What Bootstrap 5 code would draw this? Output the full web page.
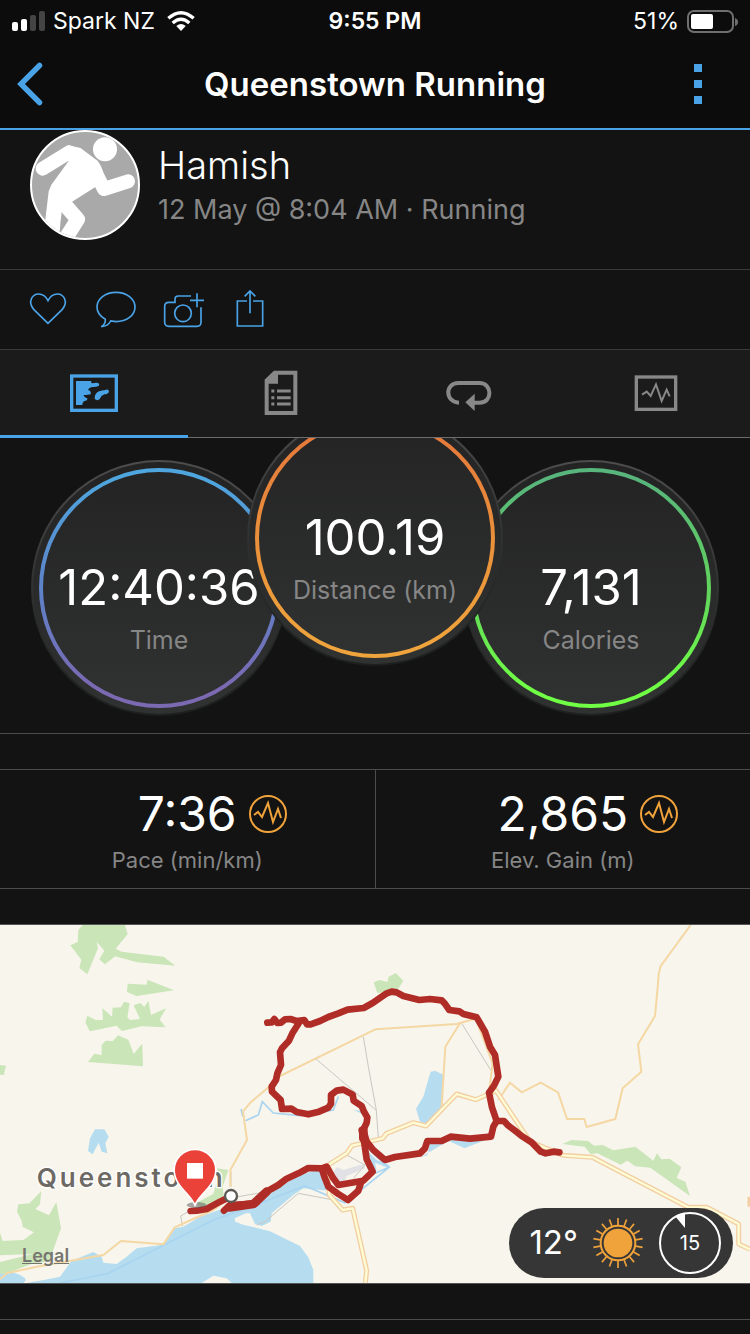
<!DOCTYPE html>
<html lang="en">
<head>
<meta charset="utf-8">
<meta name="viewport" content="width=device-width, initial-scale=1">
<title>Queenstown Running</title>
<link href="https://cdn.jsdelivr.net/npm/bootstrap@5.3.0/dist/css/bootstrap.min.css" rel="stylesheet">
<style>
  :root { --accent: #4aa3e6; --amber: #f0a23b; --ink: #131313; --muted: #868686; }
  body { background: var(--ink); color: #fff; font-family: Inter, "Liberation Sans", sans-serif; }
  svg { display: block; overflow: visible; flex: none; }
  button { background: none; border: 0; padding: 0; }
  .muted { color: var(--muted); }

  .top-area { background: #0c0c0c; border-bottom: 2px solid var(--accent); }
  .status { height: 40px; padding: 2px 12px 0; font-size: 23px; line-height: 38px; }
  .title-bar { height: 88px; padding: 0 18px; }
  .title-bar h1 { font-size: 33px; line-height: 40px; font-weight: 600; }
  .title-bar button { width: 68px; height: 48px; }

  .profile { height: 140px; padding: 0 30px; gap: 18px; border-bottom: 1px solid #3a3a3a; }
  .avatar { width: 110px; height: 110px; border-radius: 50%; overflow: hidden; background: #a9a9a9; border: 2px solid #fff; }
  .avatar svg { margin: -2px; overflow: hidden; }
  .profile h2 { font-size: 38px; line-height: 48px; font-weight: 300; margin: 11px 0 0; }
  .profile p { font-size: 27px; line-height: 42px; margin: 0; }

  .actions { height: 80px; padding: 0 28px; gap: 28px; border-bottom: 1px solid #3a3a3a; }
  .actions svg { fill: none; stroke: var(--accent); stroke-width: 5; }

  .tabs { height: 88px; background: #1b1b1b; border-bottom: 1px solid #6c6c6c; color: #888; }
  .tabs button { flex: 1 1 0; height: 88px; color: inherit; border-bottom: 3px solid transparent; }
  .tabs button.active { color: var(--accent); border-color: var(--accent); }
  .tabs svg { margin: 0 auto; }

  .dials { overflow: hidden; padding: 22px 0 17px; border-bottom: 1px solid #4c4c4c; }
  .dial { width: 256px; height: 256px; flex: none; padding: 6px; border: 2px solid transparent; border-radius: 50%;
    background: linear-gradient(#232323, #303131) padding-box, linear-gradient(#4d4d4d, #2b2c2c 60%, #1d1e1e) border-box; }
  .dial + .dial { margin-left: -40px; }
  .dial.raised { margin-top: -50px; z-index: 1; position: relative; }
  .ring { height: 100%; border: 4px solid transparent; border-radius: 50%; padding-top: 84px; text-align: center;
    background: linear-gradient(#242424, #303131) padding-box, linear-gradient(var(--from) 5%, var(--mid) 50%, var(--to) 92%) border-box; }
  .ring-time { --from: #4fa5de; --mid: #5d83c8; --to: #7b69b2; }
  .ring-distance { --from: #e5783b; --mid: #e9903b; --to: #efa33c; }
  .ring-calories { --from: #58b57c; --mid: #61d35d; --to: #70ff45; }
  .figure-value { font-size: 48px; line-height: 64px; white-space: nowrap; }
  .ring .figure-value { font-size: 49px; }
  .ring .muted { font-size: 25px; line-height: 40px; }

  .stats { margin-top: 35px; border-top: 1px solid #4c4c4c; border-bottom: 1px solid #4c4c4c; }
  .stat { height: 118px; padding-top: 12px; text-align: center; }
  .stat:first-child { border-right: 1px solid #4c4c4c; }
  .stat .pair { gap: 12px; }
  .stat .pair::before { content: ""; width: 38px; }
  .stat .muted { font-size: 22px; line-height: 28px; }

  .map-panel { margin-top: 35px; border-top: 1px solid #555; border-bottom: 1px solid #555; }
  .map-panel > svg { width: 100%; height: auto; overflow: hidden; background: #f8f5ec; }
  .legal, .legal:hover { position: absolute; left: 22px; bottom: 15px; font-size: 18px; line-height: 24px; font-weight: 600; color: #77756f; }
  .weather { position: absolute; right: 17px; bottom: 5px; height: 70px; padding: 0 11px 0 20px; gap: 15px; border-radius: 35px; background: #363636; font-size: 33px; }
  .next-card { margin-top: 35px; height: 15px; border-top: 1px solid #4c4c4c; }
</style>
</head>
<body>
<header class="top-area">
  <div class="status d-flex">
    <div class="col d-flex align-items-center gap-2">
      <svg width="33" height="20" viewBox="0 0 33 20"><g fill="#fff"><rect y="11" width="6" height="9" rx="2"/><rect x="9" y="8" width="6" height="12" rx="2"/></g><g fill="#444"><rect x="18" y="4" width="6" height="16" rx="2"/><rect x="27" width="6" height="20" rx="2"/></g></svg>
      <span>Spark NZ</span>
      <svg class="ms-1" width="28" height="20" viewBox="0 0 84 60"><g fill="none" stroke="#fff" stroke-width="10"><path d="M4 22Q42-12 80 22"/><path d="M17 36Q42 13 67 36"/></g><path fill="#fff" d="M28 45q14-12 28 0L42 60z"/></svg>
    </div>
    <div class="fw-semibold">9:55 PM</div>
    <div class="col d-flex align-items-center justify-content-end gap-2">
      <span>51%</span>
      <svg width="51" height="23" viewBox="0 0 51 23"><rect x="1" y="1" width="45" height="21" rx="6" fill="none" stroke="#6f6f6f" stroke-width="2"/><rect x="4" y="4" width="22" height="15" rx="2" fill="#fff"/><path d="M48 8q3 1 3 4t-3 4z" fill="#6f6f6f"/></svg>
    </div>
  </div>
  <div class="title-bar d-flex align-items-center justify-content-between">
    <button type="button" aria-label="Back"><svg width="24" height="42" viewBox="0 0 24 42"><path d="M21.500 2.500 3 21 21.500 39.500" fill="none" stroke="#4aa3e6" stroke-width="5.500" stroke-linecap="round"/></svg></button>
    <h1 class="m-0">Queenstown Running</h1>
    <button type="button" aria-label="More" class="d-flex justify-content-center align-items-center"><svg width="8" height="40" viewBox="0 0 8 40" fill="#4aa3e6"><path d="M0 0h8v8H0zM0 16h8v8H0zM0 32h8v8H0z"/></svg></button>
  </div>
</header>

<main>
  <section class="profile d-flex">
    <div class="avatar flex-shrink-0">
      <svg width="110" height="110" viewBox="90 30 330 330"><g fill="#fff" stroke="#fff" stroke-linejoin="round" stroke-linecap="round"><circle cx="315" cy="88" r="36" stroke="none"/><path d="M128 146 207 97" stroke-width="42" fill="none"/><path d="M207 82 240 90 288 126Q305 148 308 180L213 240 180 267Q174 310 172 352L140 315 152 215 160 196 212 125Z" stroke-width="12"/><path d="M285 155 312 207 384 184" stroke-width="42" fill="none"/><path d="M186 244 233 298 200 350" stroke-width="44" fill="none"/></g></svg>
    </div>
    <div>
      <h2>Hamish</h2>
      <p class="muted">12 May @ 8:04 AM · Running</p>
    </div>
  </section>

  <section class="actions d-flex align-items-center">
    <button type="button" aria-label="Like"><svg width="40" height="40" viewBox="84 509 120 120"><path d="M144 609 101 567C83 546 95 521 116 521Q134 521 144 541Q154 521 172 521C193 521 205 546 187 567Z"/></svg></button>
    <button type="button" aria-label="Comment"><svg width="40" height="40" viewBox="288 509 120 120"><path d="M316 597C300 588 291 577 291 560C291 535 316 516 348 516S405 535 405 560 380 604 348 604L332 602Q324 618 304 619Q317 611 316 597Z"/></svg></button>
    <button type="button" aria-label="Add photo"><svg width="40" height="40" viewBox="492 509 120 120"><path d="M603 561V606Q603 618 591 618H507Q494 618 494 606V558Q494 546 507 546H525V537Q525 527 535 527H573M591 519V561M570 540H612"/><circle cx="549" cy="579" r="25"/></svg></button>
    <button type="button" aria-label="Share"><svg width="40" height="40" viewBox="696 509 120 120"><path d="M741 542H712V617H788V542H759M750 579V514M734 528 750 512 766 528"/></svg></button>
  </section>

  <nav class="tabs d-flex" aria-label="Activity views">
    <button type="button" class="active" aria-label="Map"><svg width="48" height="48" viewBox="210 57 144 144"><rect x="215" y="78" width="134" height="103" fill="none" stroke="currentColor" stroke-width="10"/><path fill="currentColor" d="M228 93H274Q271 102 281 99L291 98Q300 100 297 107Q288 112 276 111Q263 115 265 121Q274 122 272 133Q261 136 250 135Q252 142 263 146Q261 153 253 153Q246 157 247 165H228zM284 147Q283 130 297 124Q306 121 316 120Q326 116 327 125Q325 132 313 133Q303 137 299 147Q293 154 284 147z"/></svg></button>
    <button type="button" aria-label="Details"><svg width="48" height="48" viewBox="772 57 144 144"><path d="M801 91 825 68H887V189H801Z" fill="none" stroke="currentColor" stroke-width="12"/><path d="M802 93 827 68H835V101H802z" fill="currentColor"/><path d="M815 123h9M832 123h41M815 143h9M832 143h41M815 162h9M832 162h41" stroke="currentColor" stroke-width="9"/></svg></button>
    <button type="button" aria-label="Laps"><svg width="48" height="48" viewBox="210 57 144 144"><path d="M252 158C210 157 209 99 250 99H314C352 99 354 158 314 158H292" fill="none" stroke="currentColor" stroke-width="12"/><path d="M271 157 299 131V183z" fill="currentColor"/></svg></button>
    <button type="button" aria-label="Charts"><svg width="48" height="48" viewBox="772 57 144 144"><g fill="none" stroke="currentColor"><rect x="785" y="81" width="118" height="97" stroke-width="10"/><path d="M802 134 816 125 828 138 844 103 861 153 876 119 885 139" stroke-width="6"/></g></svg></button>
  </nav>

  <section class="dials d-flex justify-content-center align-items-start">
    <div class="dial"><div class="ring ring-time"><div class="figure-value">12:40:36</div><div class="muted">Time</div></div></div>
    <div class="dial raised"><div class="ring ring-distance"><div class="figure-value">100.19</div><div class="muted">Distance (km)</div></div></div>
    <div class="dial"><div class="ring ring-calories"><div class="figure-value">7,131</div><div class="muted">Calories</div></div></div>
  </section>

  <section class="stats d-flex">
    <div class="stat col">
      <div class="pair d-flex justify-content-center align-items-center"><span class="figure-value">7:36</span>
        <button type="button" aria-label="Pace chart"><svg width="38" height="38" viewBox="0 0 38 38" fill="none" stroke="#f0a23b" stroke-width="2"><circle cx="19" cy="19" r="18"/><path d="M5 20 9 17 13 22 19 8 24 27 29 14 32 23"/></svg></button></div>
      <div class="muted">Pace (min/km)</div>
    </div>
    <div class="stat col">
      <div class="pair d-flex justify-content-center align-items-center"><span class="figure-value">2,865</span>
        <button type="button" aria-label="Elevation chart"><svg width="38" height="38" viewBox="0 0 38 38" fill="none" stroke="#f0a23b" stroke-width="2"><circle cx="19" cy="19" r="18"/><path d="M5 20 9 17 13 22 19 8 24 27 29 14 32 23"/></svg></button></div>
      <div class="muted">Elev. Gain (m)</div>
    </div>
  </section>

  <section class="map-panel position-relative">
    <svg viewBox="0 15 2250 1074" role="img" aria-label="Route map around Queenstown">
      <!-- parks -->
      <g fill="#cae5b8">
        <path d="M248 15H375L383 42 347 86 365 95 491 110 526 137 411 127 345 109 315 133 298 118 313 92 290 65 294 85 262 163 238 144 244 119 211 76 233 66 235 30z"/>
        <path d="M383 191 440 194 442 179 522 211 409 228 381 216z"/>
        <path d="M262 287 287 300H309L307 265 336 290 338 263 363 262 372 245 389 250 382 292 390 300 420 297 401 256 421 249 433 261 445 242 453 285 498 265 479 299 497 322 425 319 366 333 349 317 270 334 256 308z"/>
        <path d="M264 426 283 401 305 405V375L317 362 339 363 354 346 385 359 401 402 427 371 429 439z"/>
        <path d="M0 435 18 437 11 465 0 464z"/>
        <path d="M124 813 120 853 106 867 147 886 169 846 183 925 158 995 148 1025 100 1030 0 1068V1026L98 1002 0 1006V938L8 963 70 960 102 937 68 921 65 902 51 875 55 853 89 850z"/>
        <path d="M600 862 590 848 640 822 650 790 652 745 685 750 668 800 672 838 620 858z"/>
        <path d="M1121 187 1138 180 1162 186 1166 170 1187 159 1210 182 1190 214 1132 219z"/>
        <path d="M1688 672 1714 660 1764 663 1782 677 1808 675 1840 691 1906 680 1960 722 1971 700 1984 718 2009 716 2044 742 2030 774 2056 785 2070 828 1951 743 1906 739 1882 722 1862 734 1792 700 1772 702 1754 680z"/>
      </g>
      <!-- lakes -->
      <g fill="#b6ddef">
        <path d="M285 628H313L326 650 316 670 322 700 305 695 296 668 278 703 264 693 270 655z"/>
        <path d="M215 1022 280 996 305 1010 310 1028 350 1032 380 1010 410 985 488 974 525 925 550 920 600 890 700 855 790 835 840 800 900 765 965 745 985 812 910 805 880 825 815 880 812 905 785 918 765 912 750 880 737 880 704 895 706 905 730 914 810 934 900 978 925 1012 940 1050V1089H695L680 1075 640 1067 605 1089H80Q140 1078 180 1070 215 1055z"/>
        <path d="M0 1062 40 1058Q70 1065 78 1080L70 1089H0z"/>
        <path d="M1292 455 1305 452 1332 465 1325 560 1280 612 1260 605 1248 566 1270 530z"/>
        <path d="M1350 660 1472 640 1450 662 1394 685 1340 660 1290 668 1283 705 1262 712zM1060 570 1080 572 1085 555 1095 585zM1100 690 1130 720 1170 736 1155 740 1125 728 1130 752 1115 745z"/>
      </g>
      <path fill="#e2e1e6" d="M1000 758 1010 742 1030 750 1090 732 1095 745 1040 768 1028 795 1005 785z"/>
      <!-- rivers -->
      <path fill="none" stroke="#a9d4f0" stroke-width="5" d="M180 1089 325 1060 640 900 720 872 915 798 1035 848 1170 740 1125 760M723 567 729 590M736 602 775 585 787 545 820 579 900 587 1000 570 1015 530M1090 670 1130 710 1165 742"/>
      <!-- tracks -->
      <path fill="none" stroke="#c9c7c2" stroke-width="3" d="M948 417 1129 571M1090 350 1105 440 1129 571 1135 655M1385 310 1472 450M548 918 542 888 570 872M715 830 800 815M693 755V800M770 915 795 905 895 820 990 838M1040 705 1095 735 1060 775"/>
      <!-- minor roads -->
      <g fill="none" stroke="#f4d7a3" stroke-width="6" stroke-linejoin="round">
        <path d="M0 1078 20 1060 110 1040 310 1005 363 963 490 973 524 922 640 870 680 840M691 800V750L741 660 729 574 752 547 810 498 840 468 1126 328 1370 312 1430 295M1380 310 1336 380 1325 560M1425 290 1478 430 1468 510M2072 15 1981 140Q1974 165 1974 190L1965 288 1914 373 1924 455 1868 505 1846 597 1760 621 1753 597H1701L1674 517 1622 488 1565 517 1530 488 1495 540"/>
      </g>
      <!-- highways: casing and centre -->
      <g fill="none" stroke-linejoin="round">
        <path stroke="#f1cfa2" stroke-width="15" d="M980 738 1040 700 1056 677 1148 655 1160 640 1240 608 1278 618 1370 522 1427 539 1488 512 1590 665 1690 706 1777 712 2064 862H2120L2216 912V972L2250 988M980 738 988 825 1028 870 1058 865 1100 1052 1096 1089M2250 830V860"/>
        <path stroke="#fffbd4" stroke-width="7" d="M980 738 1040 700 1056 677 1148 655 1160 640 1240 608 1278 618 1370 522 1427 539 1488 512 1590 665 1690 706 1777 712 2064 862H2120L2216 912V972L2250 988M980 738 988 825 1028 870 1058 865 1100 1052 1096 1089"/>
      </g>
      <text x="110" y="800" font-size="78" font-weight="600" letter-spacing="9" fill="#6d6a65" stroke="#fff" stroke-width="8" paint-order="stroke">Queenstown</text>
      <!-- recorded run -->
      <g fill="none" stroke="#b02d27" stroke-width="20" stroke-linejoin="round" stroke-linecap="round">
        <path d="M802 308 815 307 823 297 832 309 843 308 855 298 871 297 890 303 913 300 921 313 932 313 960 303 985 291 1013 281 1043 269 1091 264 1118 249 1158 221 1175 215 1190 217 1210 228 1258 240 1290 237 1325 241 1334 250 1348 270 1378 274 1390 282 1430 292 1455 335 1470 380 1485 405 1495 470 1482 497 1467 518 1476 562 1490 603 1512 603 1525 617 1545 632 1565 648 1595 667 1622 695 1637 700 1661 695 1678 697"/>
        <path d="M899 305 878 338 867 362 846 385 840 397 843 435 832 460 828 480 815 500 816 515 842 540 846 567 874 566 890 576 925 583 957 575 985 563 993 551V525L1010 512 1030 509 1058 524 1061 542 1085 558 1092 575 1102 592 1100 608 1090 630 1100 665 1120 690 1155 720 1185 711 1260 700 1275 685 1282 663 1325 663 1352 650 1410 656 1473 650 1480 620 1490 603"/>
        <path d="M572 873 590 872 620 867 660 845 695 828M672 872 690 855 740 852 768 850 800 815 835 795 860 776 895 760 925 744 965 745 980 740 1000 775 1015 795 1090 782 1118 755 1100 718 1093 670 1085 630"/>
        <path d="M965 745 975 775 985 800 1015 822 1044 840 1075 812 1083 788"/>
        <path stroke-width="26" d="M688 862 760 852 800 815M1090 630V655"/>
      </g>
      <circle cx="693" cy="828" r="18" fill="#fff" stroke="#5c5a55" stroke-width="7"/>
      <ellipse cx="590" cy="855" rx="30" ry="9" fill="#555" opacity=".5"/>
      <path d="M585 850C568 815 525 795 525 749A60 58 0 0 1 645 749C645 795 602 815 585 850z" fill="#ea4138" stroke="#fff" stroke-width="10" paint-order="stroke"/>
      <rect x="561" y="729" width="48" height="47" fill="#fff"/>
    </svg>
    <a class="legal" href="#">Legal</a>
    <div class="weather d-flex align-items-center">
      <span>12°</span>
      <svg width="50" height="50" viewBox="-75 -75 150 150" fill="none" stroke="#f0a23b"><circle r="43" fill="#f0a23b" stroke="none"/><circle r="52" stroke-width="6"/><g id="rays" stroke-width="5"></g></svg>
      <svg width="64" height="64" viewBox="0 0 64 64"><circle cx="32" cy="32" r="30" fill="none" stroke="#fff" stroke-width="2"/><path d="M17 5Q22 2 27 2V17z" fill="#fff"/><text x="32" y="39" font-size="20" text-anchor="middle" fill="#fff">15</text></svg>
    </div>
  </section>
  <section class="next-card"></section>
</main>
<script>
  // eighteen rays evenly spaced round the sun
  const rays = document.getElementById('rays');
  for (let i = 0; i < 18; i++) {
    const ray = document.createElementNS('http://www.w3.org/2000/svg', 'path');
    ray.setAttribute('d', 'M0-54V-75');
    ray.setAttribute('transform', 'rotate(' + i * 20 + ')');
    rays.append(ray);
  }
</script>
<script src="https://cdn.jsdelivr.net/npm/bootstrap@5.3.0/dist/js/bootstrap.bundle.min.js"></script>
</body>
</html>
